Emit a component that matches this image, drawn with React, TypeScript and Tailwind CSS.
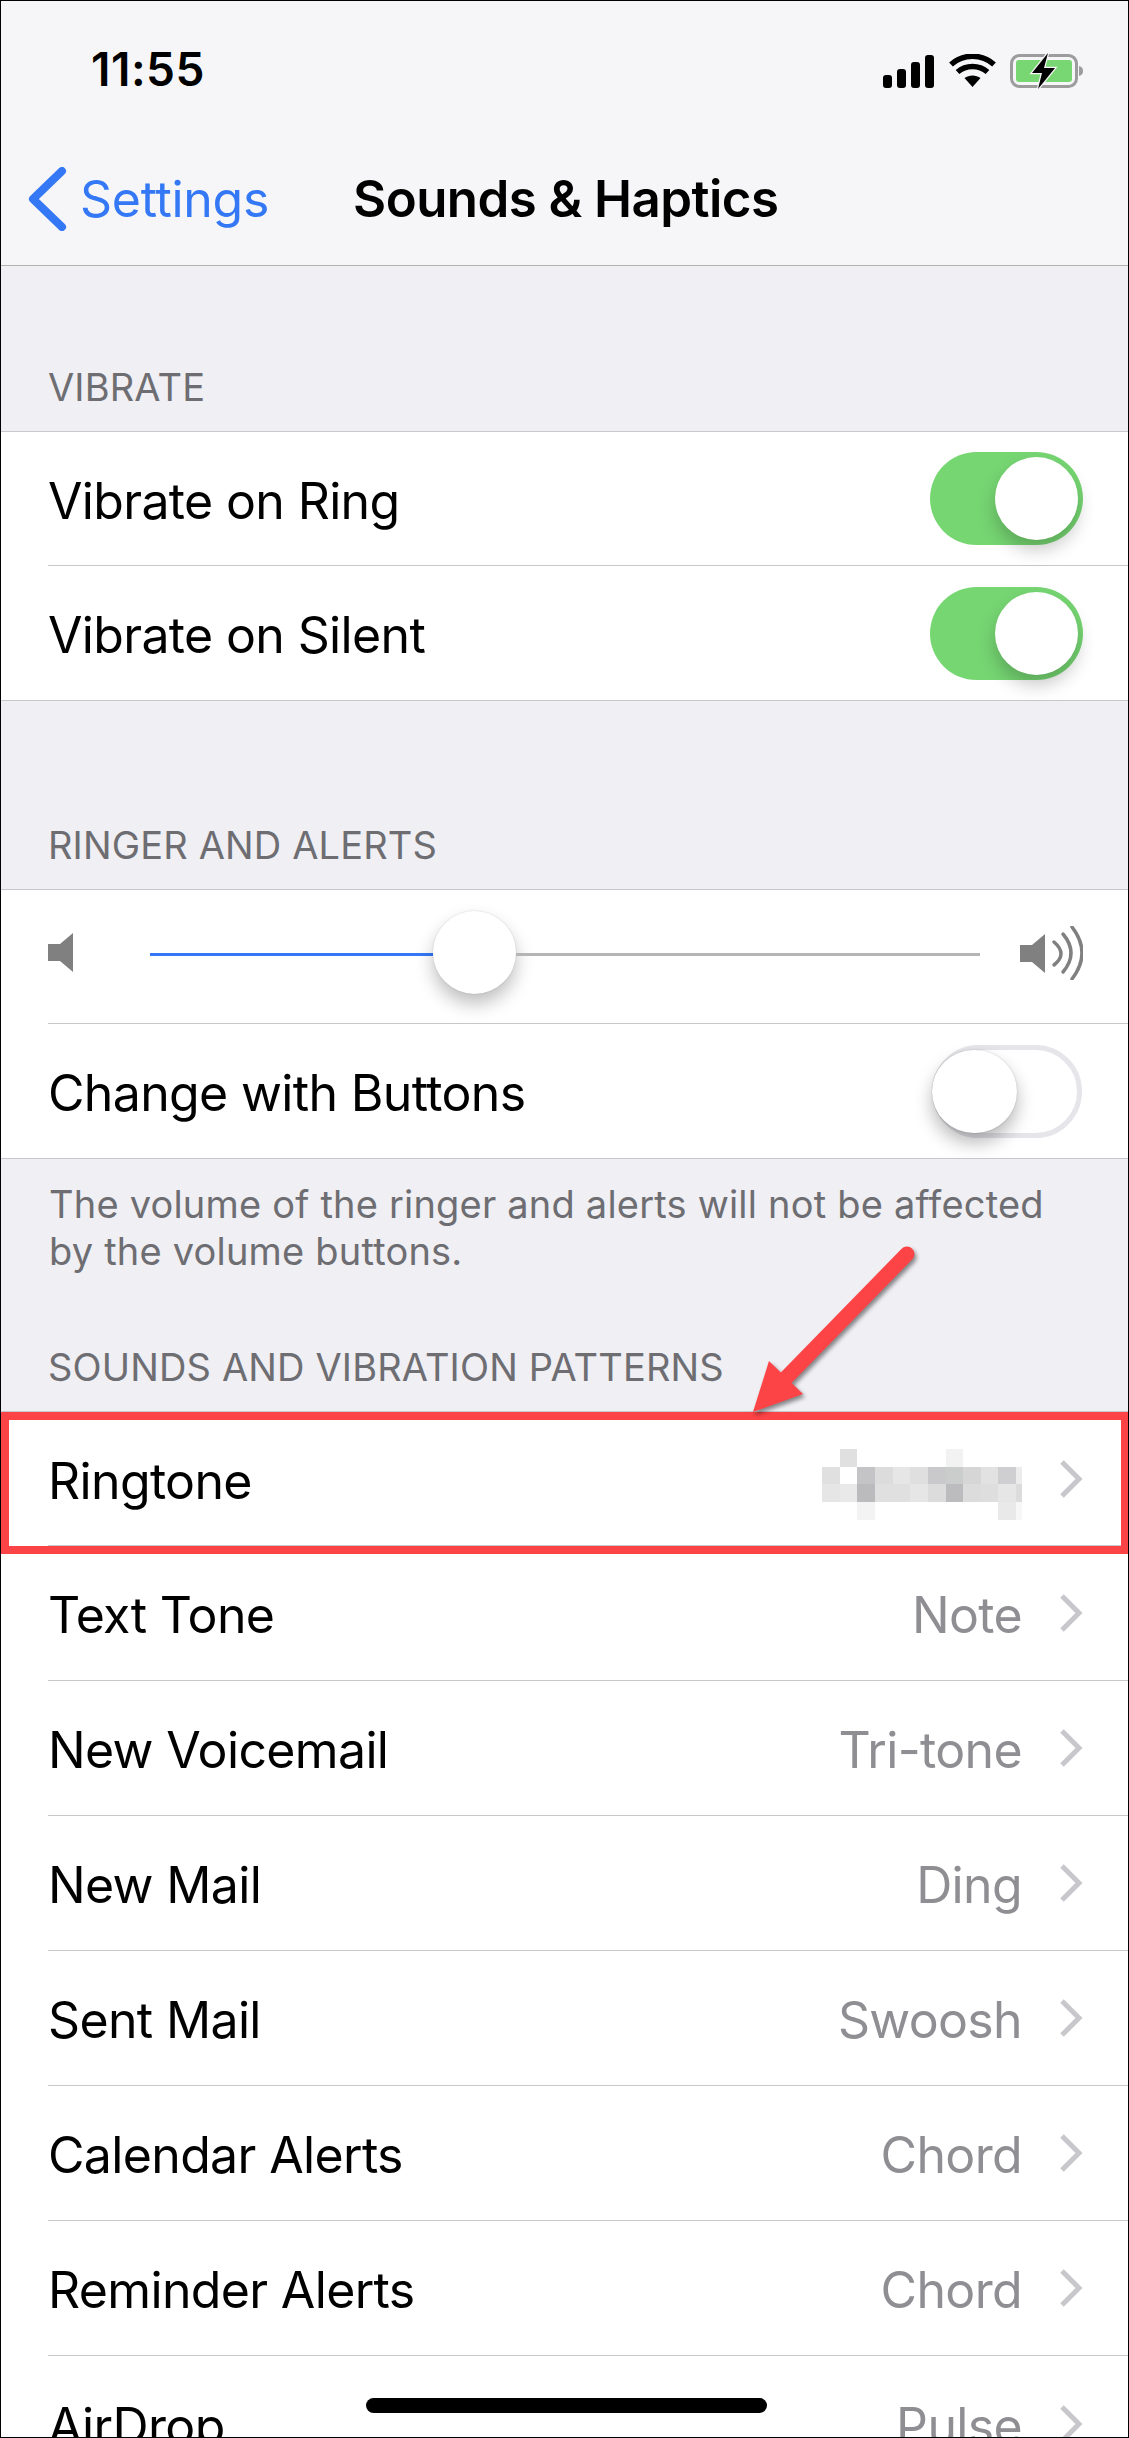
import React from "react";

const font = "font-['Inter','Liberation_Sans',sans-serif]";

function Chevron() {
  return (
    <svg className="ml-[38px] shrink-0" width="23" height="38" viewBox="0 0 23 38" fill="none">
      <path d="M2 2l17 17L2 36" stroke="#c7c7cc" strokeWidth="5" />
    </svg>
  );
}

function Toggle({ on }: { on: boolean }) {
  if (on) {
    return (
      <div className="flex h-[93px] w-[153px] items-center justify-end rounded-full bg-[#76d672] pr-[5px]">
        <div className="h-[83px] w-[83px] rounded-full bg-white shadow-[0_10px_18px_rgba(0,0,0,0.22)]" />
      </div>
    );
  }
  return (
    <div className="mr-[1px] flex h-[93px] w-[150px] items-center rounded-full border-[5px] border-[#e5e5ea] bg-white">
      <div className="-ml-[5px] h-[83px] w-[85px] rounded-full bg-white shadow-[0_10px_18px_rgba(0,0,0,0.28),0_0_2px_rgba(0,0,0,0.2)]" />
    </div>
  );
}

function Row({ last, className = "h-[134px]", innerClass = "", children }: { last?: boolean; className?: string; innerClass?: string; children: React.ReactNode }) {
  return (
    <div className={`pl-[47px] ${className}`}>
      <div className={`flex h-full items-center pr-[45px] ${last ? "" : "border-b border-[#c8c7cc]"} ${innerClass}`}>{children}</div>
    </div>
  );
}

function Label({ children }: { children: React.ReactNode }) {
  return <span className="grow pt-[5px] text-[50px] tracking-[-0.65px] text-black">{children}</span>;
}

function ValueRow({ label, value, last }: { label: string; value: string; last?: boolean }) {
  return (
    <Row last={last} className="h-[135px]">
      <Label>{label}</Label>
      <span className="pt-[5px] text-[50px] tracking-[-0.65px] text-[#8e8e93]">{value}</span>
      <Chevron />
    </Row>
  );
}

function Caps({ className, children }: { className: string; children: React.ReactNode }) {
  return (
    <div className={`flex items-end pb-[15px] pl-[47px] text-[38px] tracking-[0.15px] text-[#6d6d72] ${className}`}>{children}</div>
  );
}

const mosaic: [number, number, number, string][] = [
  [18, 0, 17, "#e0e0e0"], [124, 0, 17, "#f2f2f2"],
  [0, 18, 18, "#e0e0e0"], [35, 18, 18, "#c4c4c6"], [53, 18, 18, "#dcdcdc"], [71, 18, 17, "#e6e6e6"], [88, 18, 18, "#dfdfdf"],
  [106, 18, 18, "#c9c9cb"], [124, 18, 17, "#cbcccc"], [141, 18, 18, "#d6d6d6"], [159, 18, 17, "#e2e2e2"], [176, 18, 18, "#cfcfd2"], [194, 18, 6, "#ececec"],
  [0, 35, 18, "#e6e6e6"], [18, 35, 17, "#e9e9e9"], [35, 35, 18, "#bbbbbd"], [53, 35, 18, "#e0e0e0"], [71, 35, 17, "#e0e0e0"], [88, 35, 18, "#e6e6e6"],
  [106, 35, 18, "#dcdcdc"], [124, 35, 17, "#bcbcbe"], [141, 35, 18, "#dcdcdc"], [159, 35, 17, "#dedede"], [176, 35, 18, "#e6e6e6"], [194, 35, 6, "#dcdcdc"],
  [35, 53, 18, "#f3f3f3"], [176, 53, 18, "#e9e9e9"], [194, 53, 6, "#f7f7f7"],
];

function Mosaic() {
  return (
    <svg className="mt-[12px]" width="200" height="71" viewBox="0 0 200 71" shapeRendering="crispEdges">
      {mosaic.map(([x, y, w, c]) => (
        <rect key={`${x}-${y}`} x={x} y={y} width={w} height={18} fill={c} />
      ))}
    </svg>
  );
}

function StatusIcons() {
  return (
    <div className="flex items-center">
      <svg width="52" height="33" viewBox="0 0 52 33" fill="#000">
        <rect x="0" y="20" width="9" height="13" rx="3" />
        <rect x="14" y="14" width="9" height="19" rx="3" />
        <rect x="28" y="7" width="9" height="26" rx="3" />
        <rect x="42" y="0" width="9" height="33" rx="3" />
      </svg>
      <svg className="ml-[14px]" width="47" height="34" viewBox="0 0 47 34" fill="none">
        <path d="M23.5 33l-8-9c4.500-3.500 11.500-3.500 16 0z" fill="#000" />
        <path d="M8.500 18c8.500-7.500 21.500-7.500 30 0" stroke="#000" strokeWidth="5.500" />
        <path d="M2 10.500c12-11 31-11 43 0" stroke="#000" strokeWidth="5.500" />
      </svg>
      <svg className="ml-[14px]" width="74" height="36" viewBox="0 0 74 36" fill="none">
        <rect x="1.500" y="2.500" width="65" height="31" rx="8" stroke="#9c9c9c" strokeWidth="3" />
        <rect x="6" y="7" width="56" height="22" rx="3" fill="#78d772" />
        <path d="M69 13c3 .5 4 2.500 4 5s-1 4.500-4 5z" fill="#9c9c9c" />
        <path d="M38 0L22 20h10l-4 16 17-21H34z" fill="#000" stroke="#f6f6f8" strokeWidth="2.500" paintOrder="stroke" />
      </svg>
    </div>
  );
}

export default function App() {
  return (
    <div className={`relative h-[2438px] w-[1129px] overflow-hidden border border-black bg-[#efeff4] ${font}`}>
      <div className="h-[265px] border-b border-[#b2b2b2] bg-[#f6f6f8]">
        <div className="flex items-start justify-between pl-[90px] pr-[44px] pt-[41px]">
          <span className="text-[46px] font-semibold leading-[54px] tracking-[0.5px] text-black">11:55</span>
          <div className="pt-[11px]"><StatusIcons /></div>
        </div>
        <div className="mt-[63px] flex h-[80px] items-center pl-[27px]">
          <svg width="40" height="64" viewBox="0 0 40 64" fill="none">
            <path d="M34 4L5 32l29 28" stroke="#3478f6" strokeWidth="8" strokeLinecap="round" strokeLinejoin="round" />
          </svg>
          <span className="ml-[12px] text-[50px] tracking-[-0.3px] text-[#3478f6]">Settings</span>
          <span className="ml-[84px] text-[51px] font-semibold tracking-[-0.55px] text-black">Sounds &amp; Haptics</span>
        </div>
      </div>

      <Caps className="h-[165px]">VIBRATE</Caps>
      <div className="border-y border-[#c8c7cc] bg-white">
        <Row>
          <Label>Vibrate on Ring</Label>
          <Toggle on />
        </Row>
        <Row last>
          <Label>Vibrate on Silent</Label>
          <Toggle on />
        </Row>
      </div>

      <Caps className="h-[188px]">RINGER AND ALERTS</Caps>
      <div className="border-y border-[#c8c7cc] bg-white">
        <Row innerClass="pb-[8px]">
          <svg width="26" height="39" viewBox="0 0 26 39" fill="#808080">
            <path d="M0 11h12L25 0v39L12 28H0z" />
          </svg>
          <div className="ml-[76px] mt-[4px] h-[3px] w-[283px] bg-[#3478f6]" />
          <div className="h-[83px] w-[83px] shrink-0 rounded-full bg-white shadow-[0_10px_18px_rgba(0,0,0,0.25),0_0_2px_rgba(0,0,0,0.15)]" />
          <div className="mt-[4px] h-[3px] w-[464px] bg-[#b5b5b5]" />
          <svg className="ml-[40px]" width="63" height="54" viewBox="0 0 63 54" fill="none">
            <path d="M0 19h12L25 8v39L12 36H0z" fill="#808080" />
            <path d="M34 16Q48 28 34 39" stroke="#808080" strokeWidth="3.500" strokeLinecap="round" />
            <path d="M43 8Q59 27 43 46" stroke="#808080" strokeWidth="3.500" strokeLinecap="round" />
            <path d="M52 1Q72 27 52 53" stroke="#808080" strokeWidth="3.500" strokeLinecap="round" />
          </svg>
        </Row>
        <Row last>
          <Label>Change with Buttons</Label>
          <Toggle on={false} />
        </Row>
      </div>

      <div className="px-[48px] pt-[22px] text-[38px] leading-[47px] tracking-[0.2px] text-[#6d6d72]">
        The volume of the ringer and alerts will not be affected
        <br />
        by the volume buttons.
      </div>
      <Caps className="h-[136px]">SOUNDS AND VIBRATION PATTERNS</Caps>

      <div className="border-t border-[#c8c7cc] bg-white">
        <Row>
          <Label>Ringtone</Label>
          <Mosaic />
          <Chevron />
        </Row>
        <ValueRow label="Text Tone" value="Note" />
        <ValueRow label="New Voicemail" value="Tri-tone" />
        <ValueRow label="New Mail" value="Ding" />
        <ValueRow label="Sent Mail" value="Swoosh" />
        <ValueRow label="Calendar Alerts" value="Chord" />
        <ValueRow label="Reminder Alerts" value="Chord" />
        <ValueRow label="AirDrop" value="Pulse" last />
      </div>

      <div className="absolute -right-[1px] left-0 top-[1411px] h-[142px] border-[8px] border-[#fc4346]" />
      <svg className="absolute left-0 top-0 drop-shadow-[2px_3px_2px_rgba(0,0,0,0.45)]" width="1129" height="1440" viewBox="0 0 1129 1440" fill="none">
        <path d="M906 1253L782 1380" stroke="#fc4346" strokeWidth="15" strokeLinecap="round" />
        <path d="M752 1411L768 1360L802 1393Z" fill="#fc4346" />
      </svg>
      <div className="absolute left-[365px] top-[2397px] h-[15px] w-[401px] rounded-full bg-black" />
    </div>
  );
}
